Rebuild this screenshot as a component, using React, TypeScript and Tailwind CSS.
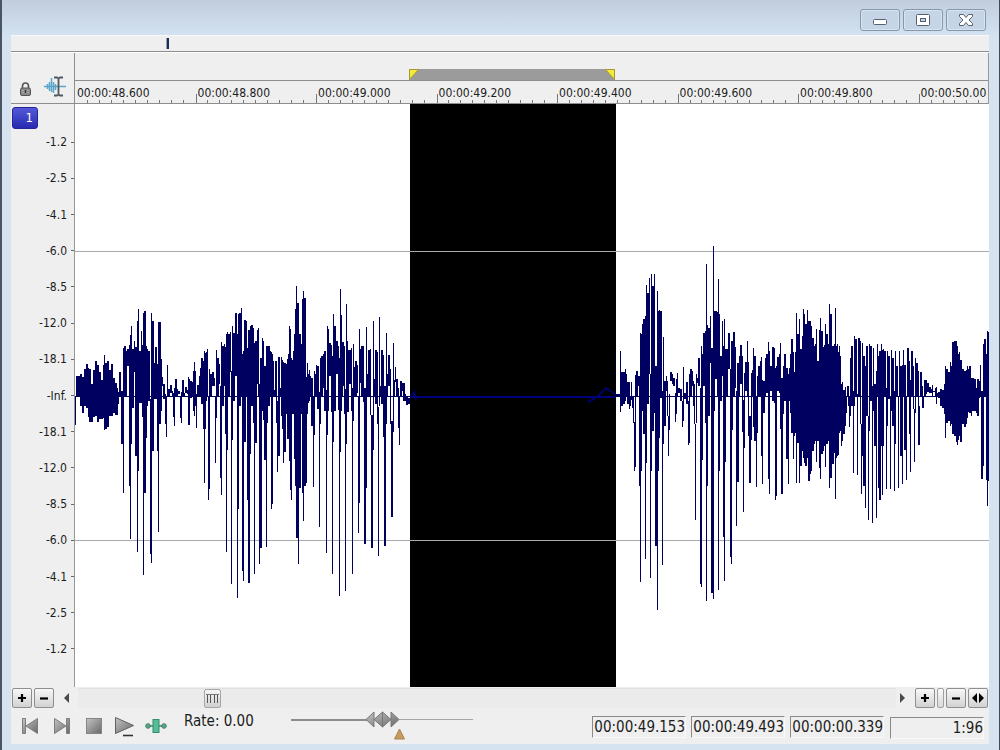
import React from "react";

const TIMES = [
  "00:00:48.600",
  "00:00:48.800",
  "00:00:49.000",
  "00:00:49.200",
  "00:00:49.400",
  "00:00:49.600",
  "00:00:49.800",
  "00:00:50.00",
];

const LEVELS = [
  "-1.2", "-2.5", "-4.1", "-6.0", "-8.5", "-12.0", "-18.1", "-Inf.",
  "-18.1", "-12.0", "-8.5", "-6.0", "-4.1", "-2.5", "-1.2",
];

const READOUTS = [
  { label: "Selection start", value: "00:00:49.153" },
  { label: "Selection end", value: "00:00:49.493" },
  { label: "Selection length", value: "00:00:00.339" },
];

// Peaks as "x above below", each one running until the next x.
const PEAKS_LEFT = `0 0 29,1 20 1,5 22 10,7 19 17,9 27 10,11 32 12,13 28 21,14 27 26,16 12 26,18 26 21,20 35 20,22 31 26,24 24 23,26 16 23,28 31 22,29 41 34,30 33 33,32 35 31,34 26 20,36 32 20,38 18 17,40 13 19,42 8 19,43 4 8,44 24 1,46 5 48,48 48 97,49 50 1,51 45 1,52 47 -30,54 51 90,55 61 143,56 70 48,57 47 12,59 55 -24,60 49 60,62 75 156,63 87 75,64 45 7,66 65 7,67 51 21,68 83 179,69 85 97,71 50 42,72 47 10,73 45 5,75 -3 158,76 83 167,77 75 55,79 33 3,80 49 3,82 32 55,83 74 136,84 74 28,86 37 15,87 19 -10,88 12 3,90 2 28,91 0 41,92 31 0,93 7 0,95 11 -3,97 5 1,98 3 21,99 8 30,100 17 0,102 7 0,103 5 -2,105 0 22,106 4 27,107 16 0,109 3 0,110 9 -3,112 6 -2,113 19 29,114 17 29,115 15 2,117 14 0,118 25 15,119 34 20,120 25 10,121 2 32,122 11 0,124 20 0,125 28 0,126 38 8,128 35 33,129 45 87,130 43 33,131 44 5,132 47 0,133 0 104,134 27 93,135 22 0,137 24 -10,139 18 -10,140 0 67,141 46 22,142 38 0,144 32 -12,145 10 82,146 54 99,147 50 10,149 52 -10,150 49 38,151 62 156,152 64 54,153 62 0,155 64 -24,156 25 188,157 70 44,158 63 5,160 83 -20,162 62 202,163 82 113,164 83 10,166 88 0,167 42 175,168 45 185,169 76 46,171 75 0,172 48 104,173 66 187,175 70 58,176 71 10,178 68 27,179 53 178,180 55 47,182 66 -12,183 68 0,184 12 168,185 38 152,187 58 15,188 55 24,189 30 64,191 50 151,192 50 27,193 50 10,195 45 0,196 44 113,197 42 108,198 35 0,199 6 0,200 35 0,201 35 27,202 -5 76,203 39 60,205 8 0,206 39 20,207 36 33,208 34 67,209 33 56,211 32 18,212 37 43,213 42 43,214 70 65,215 67 94,216 38 104,217 36 18,218 45 18,219 62 63,220 87 90,221 110 142,222 93 142,223 93 168,224 62 92,226 52 18,227 97 97,228 105 125,229 98 90,231 19 87,232 33 18,233 22 7,234 26 5,235 20 0,236 18 30,238 0 91,239 25 39,240 22 0,241 31 0,242 30 13,244 4 131,245 38 28,246 40 0,248 42 -8,249 45 15,251 6 157,252 70 39,253 67 15,254 53 -20,256 51 16,257 40 178,258 82 46,259 70 15,261 55 -22,263 50 14,264 38 200,265 107 56,266 81 15,267 54 0,268 54 -10,269 50 18,270 7 195,271 92 48,272 55 16,273 46 16,274 46 -12,276 48 15,277 8 178,278 52 25,279 29 0,280 35 0,282 31 -3,283 0 137,284 67 107,285 47 -13,286 50 0,288 50 6,289 8 148,291 69 92,292 22 0,293 46 0,295 47 19,296 -19 152,298 75 54,299 17 0,300 46 8,302 44 28,303 -11 160,304 79 10,305 10 0,306 46 8,308 41 41,309 10 150,311 63 28,312 22 0,313 41 -10,315 27 28,316 -25 121,318 53 36,319 16 0,320 29 -14,321 17 0,323 8 32,324 0 49,325 15 0,327 13 -5,328 13 5,330 2 5,331 0 9,333 -2 8,335 0 0`;

const PEAKS_RIGHT = `541 2 0,545 45 16,546 24 10,548 24 8,550 27 5,551 22 0,552 14 8,554 14 13,555 0 10,556 14 4,557 0 12,558 0 27,559 -26 75,560 21 71,561 25 0,563 20 -10,564 20 90,565 63 186,566 62 75,567 72 15,568 77 38,570 80 163,571 111 67,572 103 8,574 118 -22,575 22 182,576 122 75,577 110 35,579 122 17,580 30 150,582 105 214,583 85 75,584 86 42,585 85 2,587 5 169,588 59 48,589 15 30,591 20 -5,592 15 20,593 -20 60,594 2 34,595 24 -15,597 22 -12,598 18 -10,600 3 26,601 17 18,602 23 0,603 8 -3,605 7 5,607 -5 31,608 29 25,609 3 3,611 14 8,613 -5 49,614 22 47,615 27 0,617 25 -10,618 15 10,619 12 28,620 -28 124,621 22 27,622 18 -13,623 38 -10,625 8 188,626 50 191,627 42 64,628 63 -10,630 65 27,631 132 205,632 71 90,633 68 20,635 80 -33,636 48 197,638 150 203,639 85 15,640 85 -17,642 84 0,643 117 194,644 82 75,645 40 5,647 75 -20,648 50 141,649 77 185,650 47 66,651 47 0,653 63 -27,655 27 161,656 55 168,657 55 34,658 64 0,660 49 -8,661 5 130,662 33 86,664 40 0,665 51 -12,667 40 36,668 -4 116,669 23 52,670 34 -5,672 55 0,673 34 40,674 -20 87,676 23 44,677 26 0,678 48 31,679 40 45,681 0 91,682 20 37,683 30 0,685 35 0,686 39 60,687 16 88,688 15 17,690 38 0,691 42 -3,693 54 83,694 45 98,695 30 -5,697 49 5,699 48 7,700 28 104,701 30 100,702 39 -5,704 42 -3,705 53 33,706 18 98,708 30 18,709 42 5,711 28 63,713 22 88,714 28 5,715 42 17,716 57 37,718 44 63,719 24 40,720 44 37,721 83 87,722 62 47,724 77 87,725 47 70,727 60 55,728 87 62,729 82 67,730 72 70,732 86 62,733 75 85,735 75 78,736 70 75,737 58 55,739 50 48,740 52 45,741 67 66,742 35 45,744 66 72,745 78 83,746 65 58,748 49 55,749 51 50,750 72 71,751 62 48,753 52 45,754 92 92,755 82 82,757 50 68,759 52 57,760 88 103,761 50 62,762 52 60,763 44 59,764 50 37,765 40 35,766 12 50,767 14 45,768 6 38,770 9 30,771 0 17,772 10 0,773 10 10,774 0 31,775 38 20,776 50 10,778 5 77,779 60 10,780 57 0,782 2 79,783 58 0,785 55 28,786 -28 98,787 53 60,788 40 90,790 30 112,791 50 20,793 -20 124,794 52 35,795 50 5,797 10 127,798 48 15,799 12 50,801 25 122,802 52 0,803 40 92,804 45 104,806 52 50,807 46 99,808 47 50,809 45 0,811 8 93,812 45 30,813 40 3,815 0 93,816 46 15,817 38 30,819 5 95,820 45 48,821 30 0,823 0 92,824 45 0,825 30 60,827 31 88,828 46 0,829 31 54,831 0 84,832 48 0,834 35 38,835 16 76,836 45 0,838 30 13,839 -13 66,840 38 17,841 33 0,843 25 49,844 -10 49,845 24 0,847 10 12,848 0 12,849 16 0,851 16 -2,852 13 -4,854 9 -3,856 7 -3,857 11 0,858 5 -4,860 8 0,861 9 8,862 3 0,863 4 2,865 7 10,867 6 12,869 12 18,870 30 42,871 27 27,873 24 25,875 34 30,876 30 28,877 54 38,879 55 40,881 55 46,882 50 49,883 42 44,884 44 40,885 36 46,887 27 28,889 25 31,891 26 28,892 30 22,893 27 16,894 30 17,896 18 20,897 18 15,899 17 15,901 8 17,902 17 20,904 15 2,905 31 0,906 5 83,908 52 70,909 57 0,911 42 84,912 65 110,913 64 85,914 0 0`;

const MIDDLE = 292;

const toPath = (peaks: string) => {
  const cols = peaks.split(",").map((p) => p.trim().split(" ").map(Number));
  return cols
    .slice(0, -1)
    .map(([x, up, down], i) => {
      const end = cols[i + 1][0];
      return `M${x} ${MIDDLE - up}H${end}V${MIDDLE + down}H${x}Z`;
    })
    .join("");
};

const Waveform = () => (
  <svg
    className="block h-full min-h-[583px] w-full bg-white"
    viewBox="0 0 914 583"
    preserveAspectRatio="none"
    shapeRendering="crispEdges"
    role="img"
    aria-label="Waveform"
  >
    <rect x="335" width="206" height="583" fill="#000" />
    <path d="M0 147.500H914M0 436.500H914" stroke="#a9a9ae" />
    <path d="M0 292.500H914" stroke="#000058" />
    <path d="M336 292.500H541" stroke="#00007c" strokeWidth="2" />
    <path
      d="M336 292l3-4 2 8M513 298l6-3 4-3 8-8 10 7"
      fill="none"
      stroke="#00006c"
      strokeWidth="2"
      shapeRendering="auto"
    />
    <path d={toPath(PEAKS_LEFT)} fill="#000060" />
    <path d={toPath(PEAKS_RIGHT)} fill="#000060" />
  </svg>
);

const TitleBar = () => {
  const button =
    "flex h-[22px] w-10 items-center justify-center rounded-[3px] border border-[#8797ab] bg-[#c6d5e6] shadow-[inset_0_0_0_1px_#d8e4f0]";
  return (
    <header className="flex h-[35px] items-start justify-end gap-[3px] pt-[9px] pr-1">
      <button type="button" aria-label="Minimize" className={button}>
        <svg width="16" height="14" viewBox="0 0 16 14">
          <rect x="1.500" y="6.500" width="13" height="5" rx="1" fill="#fff" stroke="#566170" />
        </svg>
      </button>
      <button type="button" aria-label="Maximize" className={button}>
        <svg width="16" height="14" viewBox="0 0 16 14">
          <rect x="1.500" y="1.500" width="13" height="11" rx="1" fill="#fff" stroke="#566170" />
          <rect x="5.500" y="5.500" width="5" height="3" fill="#c6d5e6" stroke="#566170" />
        </svg>
      </button>
      <button type="button" aria-label="Close" className={button}>
        <svg width="16" height="14" viewBox="0 0 16 14">
          <path
            d="M1.500 1.500h4l2.500 3 2.500-3h4v2l-3.500 3.500 3.500 3.500v2h-4l-2.500-3-2.500 3h-4v-2l3.500-3.500-3.500-3.500z"
            fill="#fff"
            stroke="#566170"
          />
        </svg>
      </button>
    </header>
  );
};

const Ruler = () => (
  <div className="flex h-[52px] border-t border-white">
    <div className="flex w-16 shrink-0 items-end justify-between border-r border-b border-[#8d8d8d] pr-2 pb-1.5 pl-2">
      <button type="button" aria-label="Lock">
        <svg width="13" height="16" viewBox="0 0 13 16">
          <path d="M3.500 8V5a3 3 0 0 1 6 0v3" fill="none" stroke="#555" strokeWidth="1.600" />
          <rect x="1.500" y="7" width="10" height="7.500" rx="1.500" fill="#8a8a8a" stroke="#555" />
          <path d="M3 9.500h7M3 11.500h7" stroke="#bbb" strokeWidth=".6" />
          <path d="M6.500 9v3" stroke="#333" strokeWidth="1.500" />
        </svg>
      </button>
      <button type="button" aria-label="Edit tool">
        <svg width="22" height="22" viewBox="0 0 22 22">
          <path
            d="M0 11.500h22M3.500 9v5M5.500 7v9M7.500 3v14M9.500 7v11M11.500 9v6"
            fill="none"
            stroke="#5aa5c9"
            strokeWidth="1.500"
          />
          <path
            d="M10 2.500h3l1.500 1 1.500-1h3M10 20.500h3l1.500-1 1.500 1h3M14.500 3v17"
            fill="none"
            stroke="#505860"
            strokeWidth="1.800"
          />
        </svg>
      </button>
    </div>
    <div className="min-w-0 flex-1 border-r border-[#999]">
      <div className="flex h-7 items-end border-b border-[#8d8d8d]">
        <div className="ml-[36.6%] flex h-[11px] w-[22.6%] justify-between bg-[#9b9b9b]">
          <svg width="11" height="11" viewBox="0 0 11 11">
            <path d="M.5.5h9l-9 10z" fill="#f5ea3c" stroke="#a39b30" />
          </svg>
          <svg width="11" height="11" viewBox="0 0 11 11">
            <path d="M10.500.5h-9l9 10z" fill="#f5ea3c" stroke="#a39b30" />
          </svg>
        </div>
      </div>
      <div className="flex h-[23px] overflow-hidden border-b border-[#8d8d8d]">
        {TIMES.map((time, index) => (
          <div key={time} className="flex w-[13.2%] shrink-0">
            <span
              className={
                index === 0
                  ? "w-px shrink-0"
                  : "h-[9px] w-px shrink-0 self-end bg-[#777]"
              }
            />
            <div className="flex min-w-0 flex-1 flex-col justify-between">
              <span className="pt-[5px] pl-px text-xs leading-[14px] whitespace-nowrap">
                {time}
              </span>
              <div className="grid h-[3px] grid-cols-10">
                {Array.from({ length: 9 }, (_, tick) => (
                  <span key={tick} className="border-r border-[#777]" />
                ))}
              </div>
            </div>
          </div>
        ))}
      </div>
    </div>
  </div>
);

const LevelScale = () => (
  <div className="flex w-16 shrink-0 border-r border-[#999]">
    <div className="w-[27px] pt-px pl-px">
      <button
        type="button"
        className="h-[22px] w-full rounded-[3px] border border-[#23239a] bg-linear-to-b from-[#5558d8] to-[#2828b0] pr-1 text-right text-[13px] leading-[20px] text-white"
      >
        1
      </button>
    </div>
    <ul className="flex flex-1 flex-col py-5 text-xs">
      {LEVELS.map((level, index) => (
        <li key={index} className="flex flex-1 items-center justify-end gap-1">
          <span className="whitespace-nowrap">{level}</span>
          <span className="h-px w-[3px] bg-[#666]" />
        </li>
      ))}
    </ul>
  </div>
);

const SmallButton = ({
  label,
  children,
}: {
  label: string;
  children: React.ReactNode;
}) => (
  <button
    type="button"
    aria-label={label}
    className="flex size-5 shrink-0 items-center justify-center rounded-[2px] border border-[#8e8e8e] bg-linear-to-b from-[#f8f8f8] to-[#d2d2d2]"
  >
    {children}
  </button>
);

const Plus = () => (
  <svg width="10" height="10" viewBox="0 0 10 10">
    <path d="M1 5h8M5 1v8" stroke="#000" strokeWidth="2.200" />
  </svg>
);

const Minus = () => (
  <svg width="10" height="10" viewBox="0 0 10 10">
    <path d="M1 5.500h8" stroke="#000" strokeWidth="2.200" />
  </svg>
);

const ScrollRow = () => (
  <div className="flex h-[21px] items-center px-px">
    <div className="flex gap-0.5">
      <SmallButton label="Zoom in vertically">
        <Plus />
      </SmallButton>
      <SmallButton label="Zoom out vertically">
        <Minus />
      </SmallButton>
    </div>
    <button type="button" aria-label="Scroll left" className="flex w-6 justify-center">
      <svg width="6" height="10" viewBox="0 0 6 10">
        <path d="M6 0v10L1 5z" fill="#4a4a4a" />
      </svg>
    </button>
    <div className="flex h-5 min-w-0 flex-1 border-t border-[#e2e2e2] bg-[#ebebeb]">
      <button
        type="button"
        aria-label="Scroll position"
        className="ml-[15.4%] flex h-[19px] w-[17px] items-start justify-center rounded-[2px] border border-[#a6a6a6] bg-linear-to-b from-[#f6f6f6] to-[#d0d0d0] pt-1"
      >
        <svg width="15" height="9" viewBox="0 0 15 9" className="shrink-0">
          <path d="M2.500 0v9M5.500 0v9M9.500 0v9M12.500 0v9" stroke="#555" />
          <path d="M1 .5h13" stroke="#777" />
        </svg>
      </button>
    </div>
    <button type="button" aria-label="Scroll right" className="mr-[7px] flex w-3 justify-center">
      <svg width="6" height="10" viewBox="0 0 6 10">
        <path d="M1 0v10l5-5z" fill="#4a4a4a" />
      </svg>
    </button>
    <div className="flex gap-0.5">
      <SmallButton label="Zoom in">
        <Plus />
      </SmallButton>
      <button
        type="button"
        aria-label="Zoom level"
        className="h-5 w-[7px] rounded-[2px] border border-[#a0a0a0] bg-linear-to-b from-[#f8f8f8] to-[#d8d8d8]"
      />
      <SmallButton label="Zoom out">
        <Minus />
      </SmallButton>
      <SmallButton label="Zoom to selection">
        <svg width="14" height="10" viewBox="0 0 14 10" className="shrink-0">
          <path d="M6 0v10L1 5zM8 0v10l5-5z" fill="#000" />
        </svg>
      </SmallButton>
    </div>
  </div>
);

const Gradient = () => (
  <defs>
    <linearGradient id="metal" x1="0" y1="0" x2="1" y2="1">
      <stop offset="0" stopColor="#c4c4c4" />
      <stop offset="1" stopColor="#686868" />
    </linearGradient>
  </defs>
);

const Transport = () => (
  <div className="flex items-center gap-[14px] pl-2.5">
    <button type="button" aria-label="Go to start">
      <svg width="18" height="18" viewBox="0 0 18 18">
        <Gradient />
        <path d="M1.500 1.500h3v15h-3zM16.500 1.500v15L5 9z" fill="url(#metal)" stroke="#7c7c7c" />
      </svg>
    </button>
    <button type="button" aria-label="Go to end">
      <svg width="18" height="18" viewBox="0 0 18 18">
        <path d="M13.500 1.500h3v15h-3zM1.500 1.500v15L13 9z" fill="url(#metal)" stroke="#7c7c7c" />
      </svg>
    </button>
    <button type="button" aria-label="Stop">
      <svg width="18" height="18" viewBox="0 0 18 18">
        <rect x="1.500" y="1.500" width="15" height="15" fill="url(#metal)" stroke="#858585" />
      </svg>
    </button>
    <button type="button" aria-label="Play normal" className="-ml-1">
      <svg width="22" height="22" viewBox="0 0 22 22">
        <path d="M2.500 2.500v16l18-8z" fill="url(#metal)" stroke="#606060" />
        <path d="M10 20.500h10" stroke="#333" strokeWidth="1.600" />
      </svg>
    </button>
    <button type="button" aria-label="Scrub" className="-ml-1">
      <svg width="22" height="16" viewBox="0 0 22 16">
        <path d="M5 8h12" stroke="#3f7f68" strokeWidth="1.500" />
        <rect x="8" y="1.500" width="6" height="13" fill="#55bd98" stroke="#358b6c" />
        <circle cx="3" cy="8" r="2.300" fill="#5aa88c" stroke="#418069" />
        <circle cx="19" cy="8" r="2.300" fill="#5aa88c" stroke="#418069" />
      </svg>
    </button>
  </div>
);

const RateSlider = () => (
  <div className="flex">
    <label htmlFor="rate" className="w-[107px] pt-1 text-[15px] leading-[18px] whitespace-nowrap">
      Rate: 0.00
    </label>
    <div className="relative h-8 w-[182px]">
      <svg width="182" height="32" viewBox="0 0 182 32" className="block">
        <path d="M0 12h76" stroke="#8c8c8c" strokeWidth="2" />
        <path d="M108 11.500h74" stroke="#a5a5a5" />
        <path
          d="M83 4v15l-8-7.500zM91.500 4l8.500 7.500-8.500 7.500-8.500-7.500zM100 4v15l8-7.500z"
          fill="url(#metal)"
          stroke="#777"
        />
        <path d="M91.500 4v15" stroke="#777" />
        <path d="M108.500 21l5 10h-10z" fill="#c79a5e" stroke="#a88350" />
      </svg>
      <input
        id="rate"
        type="range"
        min={-20}
        max={20}
        defaultValue={0}
        className="absolute inset-0 h-6 w-full opacity-0"
      />
    </div>
  </div>
);

const Readout = ({ label, value }: { label: string; value: string }) => (
  <input
    aria-label={label}
    readOnly
    value={value}
    className="h-[22px] w-[94px] border border-t-[#8a8a8a] border-r-[#fafafa] border-b-[#fafafa] border-l-[#8a8a8a] bg-transparent text-right text-[15px] leading-5"
  />
);

const App = () => (
  <div className="flex min-h-screen flex-col border-r border-l-2 border-r-[#3f4a58] border-l-[#4a5462] bg-[#d5e3f1] px-[9px] pb-1.5 font-['DejaVu_Sans_Condensed','Noto_Sans',sans-serif] text-[#1c1c1c]">
    <div className="-mx-[9px] bg-linear-to-b from-[#c1cddd] to-[#d2e2f1] pr-[9px]">
      <TitleBar />
    </div>
    <main className="mr-px flex flex-1 flex-col bg-[#efefef]">
      <div className="flex h-[17px] items-center border-t border-b border-t-[#f8f8f8] border-b-[#8d8d8d]">
        <span className="ml-[15.8%] h-[11px] w-[3px] border-l border-[#8aa4c8] bg-[#1d2c4c]" />
      </div>
      <Ruler />
      <div className="flex flex-1">
        <LevelScale />
        <div className="min-w-0 flex-1">
          <Waveform />
        </div>
      </div>
      <ScrollRow />
      <footer className="flex h-9 items-center">
        <Transport />
        <div className="ml-[17px] self-start">
          <RateSlider />
        </div>
        <div className="ml-auto flex gap-[5px] pt-1 pr-[5px]">
          {READOUTS.map((readout) => (
            <Readout key={readout.label} {...readout} />
          ))}
          <div className="ml-px">
            <Readout label="Zoom ratio" value="1:96" />
          </div>
        </div>
      </footer>
    </main>
  </div>
);

export default App;
